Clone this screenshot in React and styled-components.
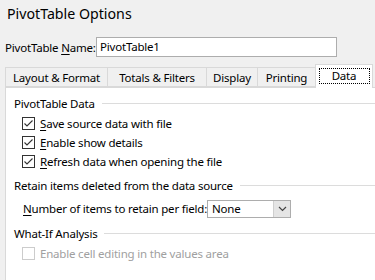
import React from "react";
import styled, { createGlobalStyle } from "styled-components";

const Global = createGlobalStyle`
  html, body { margin: 0; padding: 0; background: #f0f0f0; }
  body { font-family: "Noto Sans", "Open Sans", sans-serif; color: #000; width: 375px; height: 280px; overflow: hidden; }
  * { box-sizing: border-box; }
`;

const Dialog = styled.div`
  width: 375px;
  height: 280px;
  background: #f0f0f0;
  display: flex;
  flex-direction: column;
  overflow: hidden;
`;

const Title = styled.div`
  height: 30px;
  padding-left: 7px;
  padding-top: 3px;
  font-size: 14.2px;
  line-height: 22px;
`;

const NameRow = styled.div`
  display: flex;
  align-items: center;
  height: 20px;
  margin-top: 7px;
  padding-left: 5px;
  font-size: 11.5px;
  letter-spacing: -0.2px;
`;

const Label = styled.span`
  width: 91px;
  flex: none;
  white-space: nowrap;
`;

const TextInput = styled.div`
  width: 241px;
  height: 20px;
  background: #fff;
  border: 1px solid #adadad;
  padding-left: 3px;
  line-height: 18px;
`;

const Key = styled.span`
  text-decoration: underline;
  text-underline-offset: 2px;
`;

const TabStrip = styled.div`
  display: flex;
  align-items: flex-end;
  height: 24px;
  margin-top: 6px;
  padding-left: 5px;
  position: relative;
  z-index: 1;
  font-size: 11.5px;
  letter-spacing: -0.2px;
`;

const Tab = styled.div`
  height: ${(p) => (p.$active ? "24px" : "20px")};
  width: ${(p) => p.$w}px;
  flex: none;
  margin-left: -1px;
  margin-bottom: ${(p) => (p.$active ? "-1px" : "0")};
  border: 1px solid #d9d9d9;
  border-bottom: ${(p) => (p.$active ? "none" : "1px solid #d9d9d9")};
  background: ${(p) => (p.$active ? "#fff" : "#f0f0f0")};
  display: flex;
  align-items: center;
  justify-content: center;
  white-space: nowrap;
  padding-bottom: ${(p) => (p.$active ? "2px" : "0")};
  &:first-child { margin-left: 0; }
`;

const Focus = styled.span`
  border: 1px dotted #000;
  width: 51px;
  height: 16px;
  display: flex;
  align-items: center;
  justify-content: center;
`;

const Panel = styled.div`
  flex: 1;
  margin-left: 5px;
  background: #fff;
  border-top: 1px solid #d9d9d9;
  border-left: 1px solid #d9d9d9;
  padding: 6px 0 0 8px;
  font-size: 11.5px;
  letter-spacing: -0.2px;
  display: flex;
  flex-direction: column;
`;

const GroupHeader = styled.div`
  display: flex;
  align-items: center;
  height: 18px;
  margin-top: ${(p) => p.$mt || 0}px;
  white-space: nowrap;
  &::after {
    content: "";
    flex: 1;
    height: 1px;
    background: #dcdcdc;
    margin-left: 7px;
  }
`;

const CheckRow = styled.div`
  display: flex;
  align-items: center;
  height: 19px;
  margin-left: 8px;
  margin-top: ${(p) => p.$mt || 0}px;
  color: ${(p) => (p.$disabled ? "#a0a0a0" : "#000")};
  white-space: nowrap;
`;

const Box = styled.span`
  width: 13px;
  height: 13px;
  border: 1px solid ${(p) => (p.$disabled ? "#cccccc" : "#333")};
  background: #fff;
  margin-right: 5px;
  display: flex;
  align-items: center;
  justify-content: center;
  flex: none;
`;

const ComboRow = styled.div`
  display: flex;
  align-items: center;
  height: 21px;
  margin-top: 4px;
  margin-left: 9px;
  white-space: nowrap;
`;

const ComboLabel = styled.span`
  width: 184px;
  flex: none;
`;

const Combo = styled.div`
  width: 84px;
  height: 18px;
  border: 1px solid #adadad;
  background: #fff;
  display: flex;
  flex: none;
`;

const ComboValue = styled.span`
  flex: 1;
  padding-left: 4px;
  line-height: 16px;
`;

const ComboButton = styled.span`
  width: 17px;
  height: 16px;
  background: #e5e5e5;
  border-left: 1px solid #cfcfcf;
  display: flex;
  align-items: center;
  justify-content: center;
`;

const Check = () => (
  <svg width="11" height="11" viewBox="0 0 11 11">
    <polyline points="1.5,5.5 4,8 9.5,2.5" fill="none" stroke="#333" strokeWidth="1.1" />
  </svg>
);

const Chevron = () => (
  <svg width="9" height="6" viewBox="0 0 9 6">
    <polyline points="1,1 4.5,4.5 8,1" fill="none" stroke="#444" strokeWidth="1.2" />
  </svg>
);

const tabs = [
  ["Layout & Format", 103],
  ["Totals & Filters", 100],
  ["Display", 52],
  ["Printing", 59],
];

export default function App() {
  return (
    <>
      <Global />
      <Dialog>
        <Title>PivotTable Options</Title>
        <NameRow>
          <Label>
            PivotTable <Key>N</Key>ame:
          </Label>
          <TextInput>PivotTable1</TextInput>
        </NameRow>
        <TabStrip>
          {tabs.map(([t, w]) => (
            <Tab key={t} $w={w}>
              {t}
            </Tab>
          ))}
          <Tab $active $w={58}>
            <Focus>Data</Focus>
          </Tab>
        </TabStrip>
        <Panel>
          <GroupHeader>PivotTable Data</GroupHeader>
          <CheckRow $mt={2}>
            <Box><Check /></Box>
            <span><Key>S</Key>ave source data with file</span>
          </CheckRow>
          <CheckRow>
            <Box><Check /></Box>
            <span><Key>E</Key>nable show details</span>
          </CheckRow>
          <CheckRow>
            <Box><Check /></Box>
            <span><Key>R</Key>efresh data when opening the file</span>
          </CheckRow>
          <GroupHeader $mt={5}>Retain items deleted from the data source</GroupHeader>
          <ComboRow>
            <ComboLabel>
              <Key>N</Key>umber of items to retain per field:
            </ComboLabel>
            <Combo>
              <ComboValue>None</ComboValue>
              <ComboButton><Chevron /></ComboButton>
            </Combo>
          </ComboRow>
          <GroupHeader $mt={5}>What-If Analysis</GroupHeader>
          <CheckRow $mt={2} $disabled>
            <Box $disabled />
            <span>Enable cell editing in the values area</span>
          </CheckRow>
        </Panel>
      </Dialog>
    </>
  );
}
